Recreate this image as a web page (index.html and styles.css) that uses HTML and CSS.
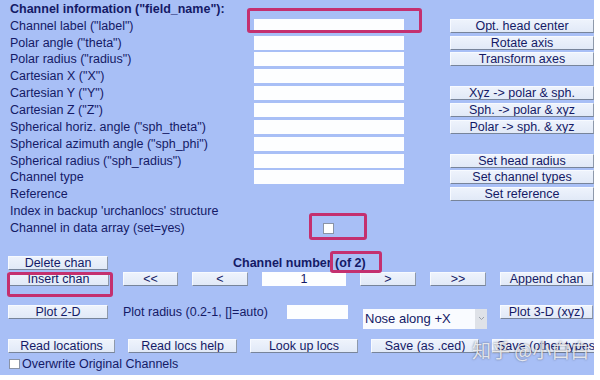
FILE: index.html
```html
<!DOCTYPE html>
<html>
<head>
<meta charset="utf-8">
<link rel="stylesheet" href="styles.css">
</head>
<body>
<div class="panel">
  <div class="form">
    <div class="lbl title">Channel information ("field_name"):</div>
    <div class="lbl">Channel label ("label")</div><div class="edit"></div><div class="btn rbtn">Opt. head center</div>
    <div class="lbl">Polar angle ("theta")</div><div class="edit"></div><div class="btn rbtn">Rotate axis</div>
    <div class="lbl">Polar radius ("radius")</div><div class="edit"></div><div class="btn rbtn">Transform axes</div>
    <div class="lbl">Cartesian X ("X")</div><div class="edit"></div>
    <div class="lbl">Cartesian Y ("Y")</div><div class="edit"></div><div class="btn rbtn">Xyz -&gt; polar &amp; sph.</div>
    <div class="lbl">Cartesian Z ("Z")</div><div class="edit"></div><div class="btn rbtn">Sph. -&gt; polar &amp; xyz</div>
    <div class="lbl">Spherical horiz. angle ("sph_theta")</div><div class="edit"></div><div class="btn rbtn">Polar -&gt; sph. &amp; xyz</div>
    <div class="lbl">Spherical azimuth angle ("sph_phi")</div><div class="edit"></div>
    <div class="lbl">Spherical radius ("sph_radius")</div><div class="edit"></div><div class="btn rbtn">Set head radius</div>
    <div class="lbl">Channel type</div><div class="edit"></div><div class="btn rbtn">Set channel types</div>
    <div class="lbl">Reference</div><div class="btn rbtn">Set reference</div>
    <div class="lbl">Index in backup 'urchanlocs' structure</div>
    <div class="lbl">Channel in data array (set=yes)</div><div class="chk"></div>
  </div>

  <div class="bottom">
    <div class="row rowA">
      <div class="btn w100">Delete chan</div>
      <div class="numlbl">Channel number (of 2)</div>
    </div>
    <div class="row rowB">
      <div class="btn w101">Insert chan</div>
      <div class="btn w55">&lt;&lt;</div>
      <div class="btn w56">&lt;</div>
      <div class="edit num w84">1</div>
      <div class="btn w56">&gt;</div>
      <div class="btn w56">&gt;&gt;</div>
      <div class="btn w93">Append chan</div>
    </div>
    <div class="row rowC">
      <div class="btn w100">Plot 2-D</div>
      <div class="plotlbl">Plot radius (0.2-1, []=auto)</div>
      <div class="edit w61"></div>
      <div class="popup">
        <span class="popup-text">Nose along +X</span>
        <span class="popup-arrow"><svg width="7" height="5" viewBox="0 0 7 5"><path d="M1 1 L3.5 3.5 L6 1" fill="none" stroke="#9aa0aa" stroke-width="1"/></svg></span>
      </div>
      <div class="btn w93 plot3d">Plot 3-D (xyz)</div>
    </div>
    <div class="row rowD">
      <div class="btn w107">Read locations</div>
      <div class="btn w109">Read locs help</div>
      <div class="btn w108">Look up locs</div>
      <div class="btn w108">Save (as .ced)</div>
      <div class="btn w108">Save (other types</div>
    </div>
    <div class="row rowE">
      <div class="smallchk"></div>
      <div class="owlbl">Overwrite Original Channels</div>
    </div>
  </div>

  <div class="mark m1"></div>
  <div class="mark m2"></div>
  <div class="mark m3"></div>
  <div class="mark m4"></div>
  <div class="watermark">知乎 @小白白</div>
</div>
</body>
</html>
```
FILE: styles.css
```css
html, body {
  margin: 0;
  padding: 0;
  background: #ffffff;
}

.panel {
  width: 594px;
  height: 375px;
  background: #a8bff6;
  position: relative;
  overflow: hidden;
  font-family: "Liberation Sans", Arial, sans-serif;
  font-size: 12.5px;
  color: #141a66;
}

.form {
  display: grid;
  grid-template-columns: 244px 150px 46px 144px;
  grid-auto-rows: 16.85px;
  padding: 0.5px 0 0 10px;
}

.lbl {
  grid-column: 1;
  align-self: center;
  white-space: nowrap;
  line-height: 14px;
}

.title {
  font-weight: bold;
}

.edit {
  grid-column: 2;
  height: 14px;
  background: #fdfeff;
  align-self: center;
  box-sizing: border-box;
}

.btn {
  height: 14px;
  box-sizing: border-box;
  background: linear-gradient(#eef3fc, #e1e9f7);
  border-top: 1px solid #f7faff;
  border-left: 1px solid #f7faff;
  border-right: 1px solid #8e99ab;
  border-bottom: 1px solid #77849a;
  text-align: center;
  line-height: 12px;
  white-space: nowrap;
  overflow: hidden;
  flex-shrink: 0;
}

.rbtn {
  grid-column: 4;
  align-self: center;
}

.chk {
  grid-column: 2;
  align-self: center;
  width: 11px;
  height: 11px;
  margin-left: 69px;
  margin-top: 2px;
  background: #ffffff;
  border: 1px solid #8a93a6;
  box-sizing: border-box;
}

.bottom {
  display: flex;
  flex-direction: column;
  padding-left: 8px;
  margin-top: 19.5px;
}

.row {
  display: flex;
  height: 14px;
  align-items: flex-start;
}

.numlbl {
  margin-left: 125px;
  font-weight: bold;
  line-height: 14px;
  white-space: nowrap;
}

.rowB {
  margin-top: 2px;
  gap: 14px;
}

.num {
  text-align: center;
  line-height: 14px;
  flex-shrink: 0;
}

.w55 { width: 55px; }
.w56 { width: 56px; }
.w61 { width: 61px; flex-shrink: 0; }
.w84 { width: 84px; }
.w93 { width: 93px; }
.w100 { width: 100px; }
.w101 { width: 101px; }
.w107 { width: 107px; }
.w108 { width: 108px; }
.w109 { width: 109px; }

.rowC {
  margin-top: 19px;
}

.plotlbl {
  margin-left: 15px;
  width: 164px;
  line-height: 14px;
  white-space: nowrap;
  flex-shrink: 0;
}

.popup {
  margin-left: 15px;
  margin-top: 4px;
  width: 124px;
  height: 20px;
  flex-shrink: 0;
  display: flex;
  background: #f9fbff;
  box-sizing: border-box;
}

.popup-text {
  flex: 1;
  padding-left: 2px;
  line-height: 20px;
  font-size: 13px;
  white-space: nowrap;
}

.popup-arrow {
  width: 12px;
  display: flex;
  align-items: center;
  justify-content: center;
  background: #dfe2e8;
}

.plot3d {
  margin-left: 13px;
}

.rowD {
  margin-top: 20px;
  gap: 13px;
}

.rowE {
  margin-top: 5px;
  height: 12px;
  align-items: center;
}

.smallchk {
  width: 11px;
  height: 10px;
  margin-left: 1px;
  background: #ffffff;
  border: 1px solid #8a93a6;
  box-sizing: border-box;
}

.owlbl {
  margin-left: 2px;
  line-height: 12px;
  white-space: nowrap;
}

.mark {
  position: absolute;
  border: 3px solid #c4306f;
  border-radius: 3px;
  box-sizing: border-box;
}

.m1 { left: 247px; top: 8px; width: 175px; height: 25px; }
.m2 { left: 309px; top: 213px; width: 58px; height: 27px; }
.m3 { left: 330px; top: 251px; width: 52px; height: 22px; }
.m4 { left: 7px; top: 272px; width: 106px; height: 25px; }

.watermark {
  position: absolute;
  left: 472px;
  top: 338px;
  font-family: "Noto Sans CJK SC", "Noto Sans", sans-serif;
  font-size: 19px;
  line-height: 24px;
  white-space: nowrap;
  color: rgba(255, 255, 255, 0.78);
  text-shadow: 0 0 2px rgba(70, 70, 80, 0.75);
}
```
